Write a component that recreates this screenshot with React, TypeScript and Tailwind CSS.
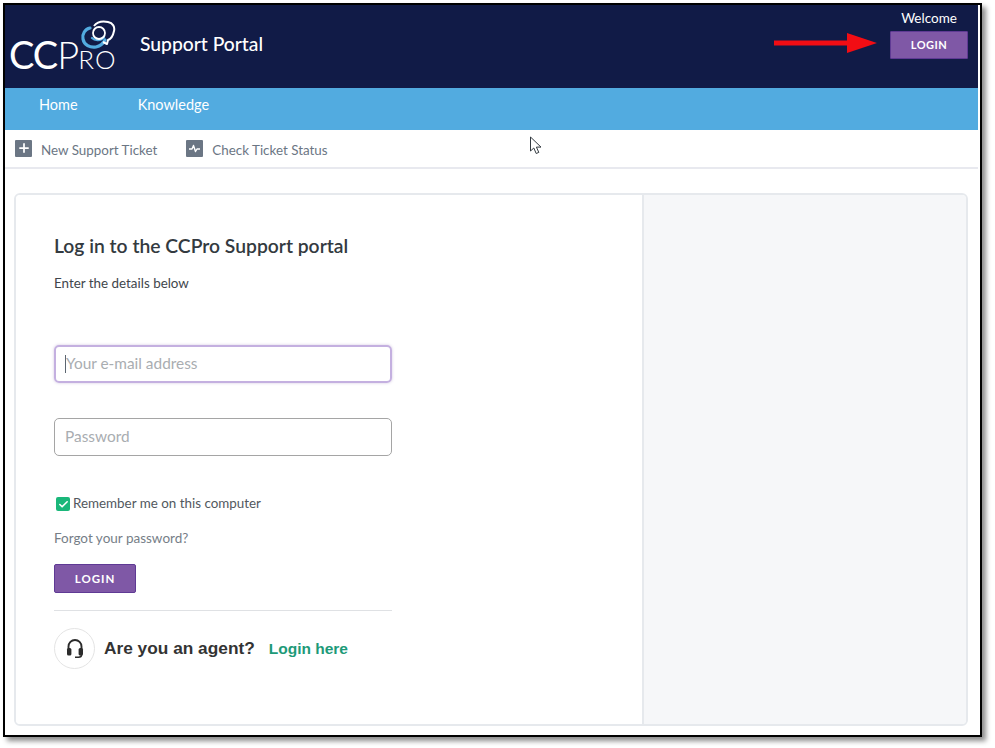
import { Check, Plus } from 'lucide-react'

function Logo() {
  return (
    <div className="relative w-[108px] h-[52px] shrink-0">
      <svg width="108" height="52" viewBox="0 0 108 52" fill="none" className="absolute left-0 top-0">
        {/* blue link */}
        <path d="M79 9 C74 10 71 15 72 20 C73 26 79 29 85 28 C89 27 92 25 94 21" stroke="#52abe0" strokeWidth="3.2" strokeLinecap="round" />
        <path d="M81 19 C84 22 90 22 93 18" stroke="#52abe0" strokeWidth="2.4" strokeLinecap="round" />
        {/* white link */}
        <path d="M83 7 C86 3 92 2 97 3 C102 4 104 8 103 12 C102 17 100 20 97 21 L96 25 L92 23" stroke="#ffffff" strokeWidth="2" strokeLinejoin="round" />
        <circle cx="88" cy="14" r="6" stroke="#ffffff" strokeWidth="1.8" />
      </svg>
      <div className="absolute left-[-2px] bottom-[-2px] flex items-baseline text-white font-['Lato',sans-serif] leading-none whitespace-nowrap">
        <span className="text-[38px] font-normal tracking-[-1px]">CC</span>
        <span className="text-[38px] font-light tracking-[-1px]">P</span>
        <span className="text-[26px] font-light tracking-[1px]">RO</span>
      </div>
    </div>
  )
}

function PulseIcon() {
  return (
    <span className="flex h-[17px] w-[17px] items-center justify-center rounded-[1px] bg-[#6b7684]">
      <svg width="13" height="13" viewBox="0 0 13 13" fill="none">
        <path d="M1 7h3l1.5-3.5 2 6L9 7h3" stroke="#ffffff" strokeWidth="1.4" strokeLinejoin="round" />
      </svg>
    </span>
  )
}

function Headset() {
  return (
    <svg width="18" height="21" viewBox="0 0 18 21" fill="none">
      <path d="M2.5 11V8.5a6.5 6.5 0 0 1 13 0V11" stroke="#2b2b2b" strokeWidth="1.9" />
      <rect x="1" y="10" width="4.4" height="7.5" rx="1.5" fill="#2b2b2b" />
      <rect x="12.6" y="10" width="4.4" height="7.5" rx="1.5" fill="#2b2b2b" />
      <path d="M15.5 17c0 1.5-1.5 2.2-3 2.2H9" stroke="#2b2b2b" strokeWidth="1.6" />
    </svg>
  )
}

export default function App() {
  return (
    <div className="h-[748px] w-[995px] bg-white pl-[3px] pt-[3px] font-['Lato',sans-serif]">
      <div className="relative flex h-[734px] w-[979px] flex-col border-2 border-black bg-white pr-[2px] shadow-[4px_4px_5px_rgba(0,0,0,0.45)]">
        {/* header */}
        <header className="flex h-[83px] shrink-0 items-center justify-between bg-[#111b47] pl-[6px] pr-[10px]">
          <div className="flex items-center">
            <div className="mt-[-3px]">
              <Logo />
            </div>
            <span className="ml-[21px] mt-[-4px] text-[19.3px] font-medium text-white">Support Portal</span>
          </div>
          <div className="flex h-full flex-col items-center pt-[3px]">
            <span className="text-[13.5px] leading-[20px] text-white">Welcome</span>
            <button className="mt-[3px] h-[28px] w-[78px] rounded-[1px] border border-[#5f3a94] bg-[#7f58a6] text-[11px] font-bold tracking-[0.5px] text-white">
              LOGIN
            </button>
          </div>
        </header>

        {/* nav */}
        <nav className="flex h-[42px] shrink-0 items-center gap-[60px] bg-[#52abe0] pb-[8px] pl-[34px] text-[14.5px] text-white">
          <span>Home</span>
          <span>Knowledge</span>
        </nav>

        {/* sub nav */}
        <div className="flex h-[39px] shrink-0 items-center border-b-2 border-[#e8e9ef] pl-[10px] pt-[4px] text-[13.4px] text-[#6b7684]">
          <span className="flex items-center">
            <span className="mt-[-4px] flex h-[17px] w-[17px] items-center justify-center rounded-[1px] bg-[#6b7684]">
              <Plus size={14} strokeWidth={3} color="#ffffff" />
            </span>
            <span className="ml-[9px]">New Support Ticket</span>
          </span>
          <span className="ml-[29px] flex items-center">
            <span className="mt-[-4px]">
              <PulseIcon />
            </span>
            <span className="ml-[9px]">Check Ticket Status</span>
          </span>
        </div>

        {/* login card */}
        <div className="ml-[9px] mr-[10px] mt-[24px] flex h-[533px] overflow-hidden rounded-[6px] border-2 border-[#e6e9ed]">
          <div className="w-[628px] shrink-0 border-r-2 border-[#e6e9ed] bg-white pl-[38px] pt-[39px]">
            <h1 className="text-[19.3px] font-semibold leading-[24px] text-[#333a40]">Log in to the CCPro Support portal</h1>
            <p className="mt-[16px] text-[13.4px] leading-[18px] text-[#3f464c]">Enter the details below</p>

            <div className="mt-[53px] flex h-[38px] w-[338px] items-center rounded-[5px] border-2 border-[#c4b0e0] pl-[9px] shadow-[0_0_3px_rgba(127,88,166,0.35)]">
              <span className="h-[18px] w-px bg-[#5c6670]"></span>
              <span className="text-[15.4px] text-[#a9adb1]">Your e-mail address</span>
            </div>
            <div className="mt-[35px] flex h-[38px] w-[338px] items-center rounded-[5px] border border-[#a5a5a5] pl-[10px]">
              <span className="text-[15.4px] text-[#a9adb1]">Password</span>
            </div>

            <div className="mt-[38px] flex items-center pl-[2px]">
              <span className="mt-[2px] flex h-[14px] w-[14px] items-center justify-center rounded-[2px] bg-[#1ab77a]">
                <Check size={11} strokeWidth={3.5} color="#ffffff" />
              </span>
              <span className="ml-[3px] text-[13.4px] leading-[18px] text-[#52585e]">Remember me on this computer</span>
            </div>
            <p className="mt-[17px] text-[13.5px] leading-[18px] text-[#767e87]">Forgot your password?</p>
            <button className="mt-[17px] h-[29px] w-[82px] rounded-[2px] border border-[#5f3a94] bg-[#7f58a6] text-[11.5px] font-bold tracking-[1px] text-white">
              LOGIN
            </button>
            <div className="mt-[17px] w-[338px] border-t border-[#dfe1e4]"></div>

            <div className="mt-[17px] flex items-center">
              <span className="flex h-[41px] w-[41px] items-center justify-center rounded-full border border-[#e4e4e4]">
                <Headset />
              </span>
              <span className="ml-[9px] font-['Liberation_Sans',sans-serif] text-[17.3px] font-bold text-[#333333]">Are you an agent?</span>
              <span className="ml-[14px] font-['Liberation_Sans',sans-serif] text-[15.5px] font-bold text-[#1d9a78]">Login here</span>
            </div>
          </div>
          <div className="flex-1 bg-[#f6f7f9]"></div>
        </div>

        {/* red arrow annotation */}
        <svg width="104" height="20" viewBox="0 0 104 20" className="absolute left-[769px] top-[28px]">
          <path d="M0 7.5h73V0l30 10-30 10v-7.5H0z" fill="#f20d14" />
        </svg>

        {/* mouse cursor in the screenshot */}
        <svg width="14" height="20" viewBox="0 0 14 20" className="absolute left-[524px] top-[131px]">
          <path d="M1.5 1v14l3.3-3 2.4 5.5 2.6-1.1-2.4-5.3h4.6z" fill="#ffffff" stroke="#333a40" strokeWidth="1" strokeLinejoin="round" />
        </svg>
      </div>
    </div>
  )
}
